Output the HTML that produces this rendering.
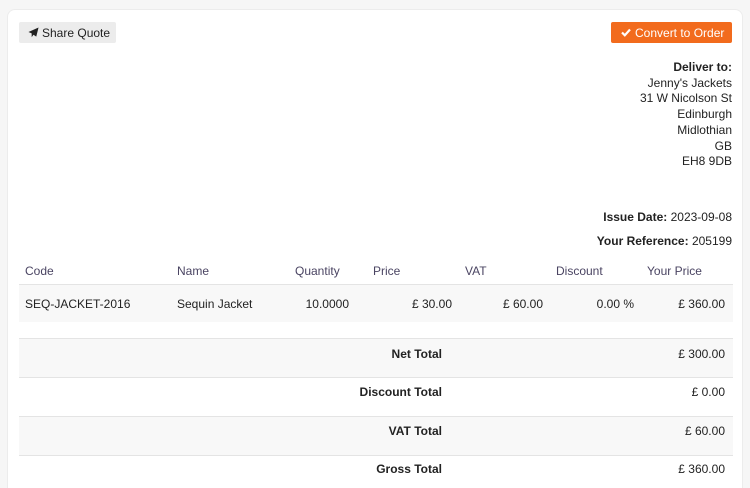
<!DOCTYPE html>
<html><head><meta charset="utf-8"><style>
*{margin:0;padding:0;box-sizing:border-box}
html{width:750px;height:488px;overflow:hidden}
body{width:750px;height:488px;background:#f6f6f6;font-family:"Liberation Sans",sans-serif;font-size:12px;color:#222;position:relative;overflow:hidden}
.card{position:absolute;left:7px;top:9px;width:736px;height:479px;background:#fff;border-radius:8px 8px 0 0;border:1px solid #ececec;border-bottom:none}
.a{position:absolute;white-space:nowrap}
.r{text-align:right}
.btn{position:absolute;height:21px;line-height:21px;border-radius:2px}
.h{color:#4a4462}
.line{position:absolute;left:19px;width:714px;height:1px;background:#e4e4e4}
.bg{position:absolute;left:19px;width:714px;background:#f8f8f8}
b{font-weight:bold}
</style></head><body>
<div class="card"></div>
<div class="btn" style="left:19px;top:22px;width:97px;background:#ececec;color:#222">
<svg style="position:absolute;left:9px;top:5px" width="11" height="11" viewBox="0 0 12 12"><path d="M11.5 0.5 L0.5 5.5 L4 7 L4 11 L6 8.5 L9 10.5 Z" fill="#222"/></svg>
<span class="a" style="left:23px;top:1px">Share Quote</span></div>
<div class="btn" style="left:611px;top:22px;width:121px;background:#f26b1d;color:#fff">
<svg style="position:absolute;left:10px;top:6px" width="10" height="9" viewBox="0 0 10 9"><path d="M1 4.5 L3.8 7.3 L9 1.5" stroke="#fff" stroke-width="2.2" fill="none"/></svg>
<span class="a" style="left:24px;top:1px">Convert to Order</span></div>
<div class="a r" style="right:18px;top:60px;line-height:15.7px"><b>Deliver to:</b><br>Jenny's Jackets<br>31 W Nicolson St<br>Edinburgh<br>Midlothian<br>GB<br>EH8 9DB</div>
<div class="a r" style="right:18px;top:210px"><b>Issue Date:</b> 2023-09-08</div>
<div class="a r" style="right:18px;top:234px"><b>Your Reference:</b> 205199</div>
<div class="h">
<span class="a" style="left:25px;top:264px">Code</span>
<span class="a" style="left:177px;top:264px">Name</span>
<span class="a" style="left:295px;top:264px">Quantity</span>
<span class="a" style="left:373px;top:264px">Price</span>
<span class="a" style="left:465px;top:264px">VAT</span>
<span class="a" style="left:556px;top:264px">Discount</span>
<span class="a" style="left:647px;top:264px">Your Price</span>
</div>
<div class="line" style="top:284px"></div>
<div class="bg" style="top:285px;height:37px"></div>
<span class="a" style="left:25px;top:297px">SEQ-JACKET-2016</span>
<span class="a" style="left:177px;top:297px">Sequin Jacket</span>
<span class="a r" style="right:401px;top:297px">10.0000</span>
<span class="a r" style="right:298px;top:297px">£ 30.00</span>
<span class="a r" style="right:207px;top:297px">£ 60.00</span>
<span class="a r" style="right:116px;top:297px">0.00 %</span>
<span class="a r" style="right:25px;top:297px">£ 360.00</span>
<div class="line" style="top:338px"></div>
<div class="bg" style="top:339px;height:38px"></div>
<div class="line" style="top:377px"></div>
<div class="line" style="top:416px"></div>
<div class="bg" style="top:417px;height:38px"></div>
<div class="line" style="top:455px"></div>
<span class="a r" style="right:308px;top:347px"><b>Net Total</b></span>
<span class="a r" style="right:25px;top:347px">£ 300.00</span>
<span class="a r" style="right:308px;top:385px"><b>Discount Total</b></span>
<span class="a r" style="right:25px;top:385px">£ 0.00</span>
<span class="a r" style="right:308px;top:424px"><b>VAT Total</b></span>
<span class="a r" style="right:25px;top:424px">£ 60.00</span>
<span class="a r" style="right:308px;top:462px"><b>Gross Total</b></span>
<span class="a r" style="right:25px;top:462px">£ 360.00</span>
</body></html>
